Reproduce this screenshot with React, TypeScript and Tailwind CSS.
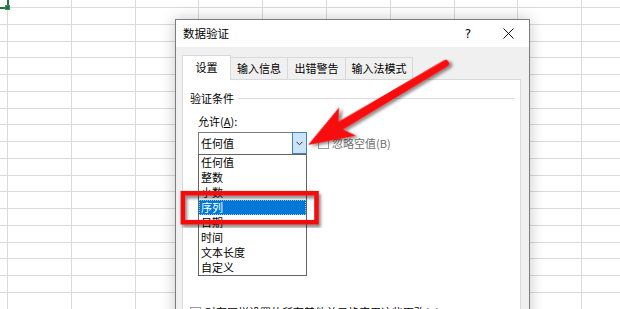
import React from 'react';

// Options of the "允许" combo
const ALLOW_OPTIONS = ['任何值', '整数', '小数', '序列', '日期', '时间', '文本长度', '自定义'];
const SELECTED = 3;

const TABS = [
    { label: '设置', w: 'w-[49px]', active: true },
    { label: '输入信息', w: 'w-[57px]', active: false },
    { label: '出错警告', w: 'w-[58px]', active: false },
    { label: '输入法模式', w: 'w-[67px]', active: false },
];

// Spreadsheet cells behind the dialog
const SheetGrid: React.FC = () => (
    <div className="grid grid-cols-[8px_repeat(10,63.8px)] grid-rows-[8px_repeat(18,16.75px)]">
        {Array.from({ length: 11 * 19 }, (_, i) => (
            <div key={i} className="border-r border-b border-[#dadada]" />
        ))}
    </div>
);

// Green cell cursor corner in the top-left
const CellCursor: React.FC = () => (
    <>
        <div className="absolute left-[7px] top-0 w-[2px] h-[5px] bg-[#217346]" />
        <div className="absolute left-0 top-[7px] w-[5px] h-[2px] bg-[#217346]" />
        <div className="absolute left-[5px] top-[5px] w-[5px] h-[5px] bg-[#217346] border border-[#3d8c5e]" />
    </>
);

const Checkbox: React.FC = () => (
    <span className="inline-block w-[11px] h-[11px] border border-[#9a9a9a] bg-white shrink-0" />
);

const AllowCombo: React.FC = () => (
    <div className="relative w-[109px] h-[23px] border border-[#7a7a7a] bg-white flex">
        <span className="flex-1 pl-[2px] leading-[21px]">任何值</span>
        <span className="w-[15px] h-[22px] -mt-px -mr-px bg-[#cce4f7] border border-[#3e82c4] flex items-center justify-center">
            <svg width="7" height="5" viewBox="0 0 7 5">
                <path d="M0.5 0.8 L3.5 3.8 L6.5 0.8" fill="none" stroke="#333" strokeWidth="1" />
            </svg>
        </span>
        {/* Open list */}
        <div className="absolute left-[-1px] top-full w-[109px] border border-[#646464] bg-white z-20">
            {ALLOW_OPTIONS.map((opt, i) => (
                <div
                    key={opt}
                    className={
                        i === SELECTED
                            ? 'h-[15px] leading-[13px] pl-[1px] bg-[#0078d7] text-white border border-dotted border-[#8fc3ee]'
                            : 'h-[15px] leading-[15px] pl-[2px]'
                    }
                >
                    {opt}
                </div>
            ))}
        </div>
    </div>
);

const DataValidationDialog: React.FC = () => (
    <div className="absolute left-[175px] top-[19px] w-[355px] h-[320px] border border-[#7c7c7c] bg-[#f0f0f0] shadow-[0_0_14px_rgba(0,0,0,0.22)] flex flex-col text-[11px] text-black font-['Noto_Sans_CJK_SC',sans-serif]">
        {/* Title bar */}
        <div className="h-[27px] bg-white flex items-center pl-[7px] shrink-0">
            <span className="text-[11.5px]">数据验证</span>
            <span className="ml-auto w-[20px] text-center text-[12px] font-['DejaVu_Sans',sans-serif]">?</span>
            <span className="ml-[20px] mr-[11px] w-[20px] flex justify-center">
                <svg width="11" height="11" viewBox="0 0 11 11">
                    <path d="M0.5 0.5 L10.5 10.5 M10.5 0.5 L0.5 10.5" stroke="#111" strokeWidth="1" />
                </svg>
            </span>
        </div>

        {/* Body */}
        <div className="flex-1 flex flex-col pt-[8px] pl-[6px] pr-[8px]">
            {/* Tabs */}
            <div className="flex items-end h-[24px] relative z-10">
                {TABS.map((t) =>
                    t.active ? (
                        <div
                            key={t.label}
                            className={`${t.w} h-[25px] -mb-px bg-white border border-b-0 border-[#d9d9d9] flex items-center justify-center pb-[1px]`}
                        >
                            {t.label}
                        </div>
                    ) : (
                        <div
                            key={t.label}
                            className={`${t.w} h-[22px] border-t border-r border-[#d9d9d9] bg-[#f0f0f0] flex items-center justify-center`}
                        >
                            {t.label}
                        </div>
                    )
                )}
            </div>

            {/* Tab page */}
            <div className="flex-1 bg-white border border-[#d9d9d9] pl-[7px] pr-[5px] pt-[10px]">
                <div className="flex items-center h-[16px]">
                    <span>验证条件</span>
                    <span className="flex-1 h-px bg-[#dcdcdc] ml-[4px]" />
                </div>

                <div className="mt-[7px] pl-[8px] h-[16px] leading-[16px]">
                    允许(<span className="underline">A</span>):
                </div>

                <div className="mt-[3px] pl-[8px] flex items-center">
                    <AllowCombo />
                    <span className="ml-[11px] flex items-center gap-[3px] text-[#6d6d6d]">
                        <Checkbox />
                        <span>忽略空值(B)</span>
                    </span>
                </div>

                <div className="mt-[149px] flex items-center gap-[4px] text-black">
                    <Checkbox />
                    <span>对有同样设置的所有其他单元格应用这些更改(P)</span>
                </div>
            </div>
        </div>
    </div>
);

// Red annotations drawn over the screenshot
const Annotations: React.FC = () => (
    <svg className="absolute inset-0 pointer-events-none z-30" width="620" height="309" viewBox="0 0 620 309">
        <defs>
            <filter id="shade" x="-20%" y="-20%" width="140%" height="140%">
                <feDropShadow dx="2" dy="3" stdDeviation="1.8" floodColor="#000" floodOpacity="0.45" />
            </filter>
        </defs>
        <rect
            x="182.9"
            y="193.2"
            width="133.6"
            height="29"
            fill="none"
            stroke="#f20d0d"
            strokeWidth="4.6"
            filter="url(#shade)"
        />
        <g transform="translate(308 145) rotate(-30.66)" filter="url(#shade)">
            <path
                d="M0 0 L46 -16.5 L38 -4.6 L160 -3.4 A3.4 3.4 0 0 1 160 3.4 L38 4.6 L46 16.5 Z"
                fill="#f70a0a"
            />
        </g>
    </svg>
);

export default function App() {
    return (
        <div className="relative w-[620px] h-[309px] overflow-hidden bg-white">
            <SheetGrid />
            <CellCursor />
            <DataValidationDialog />
            <Annotations />
        </div>
    );
}
